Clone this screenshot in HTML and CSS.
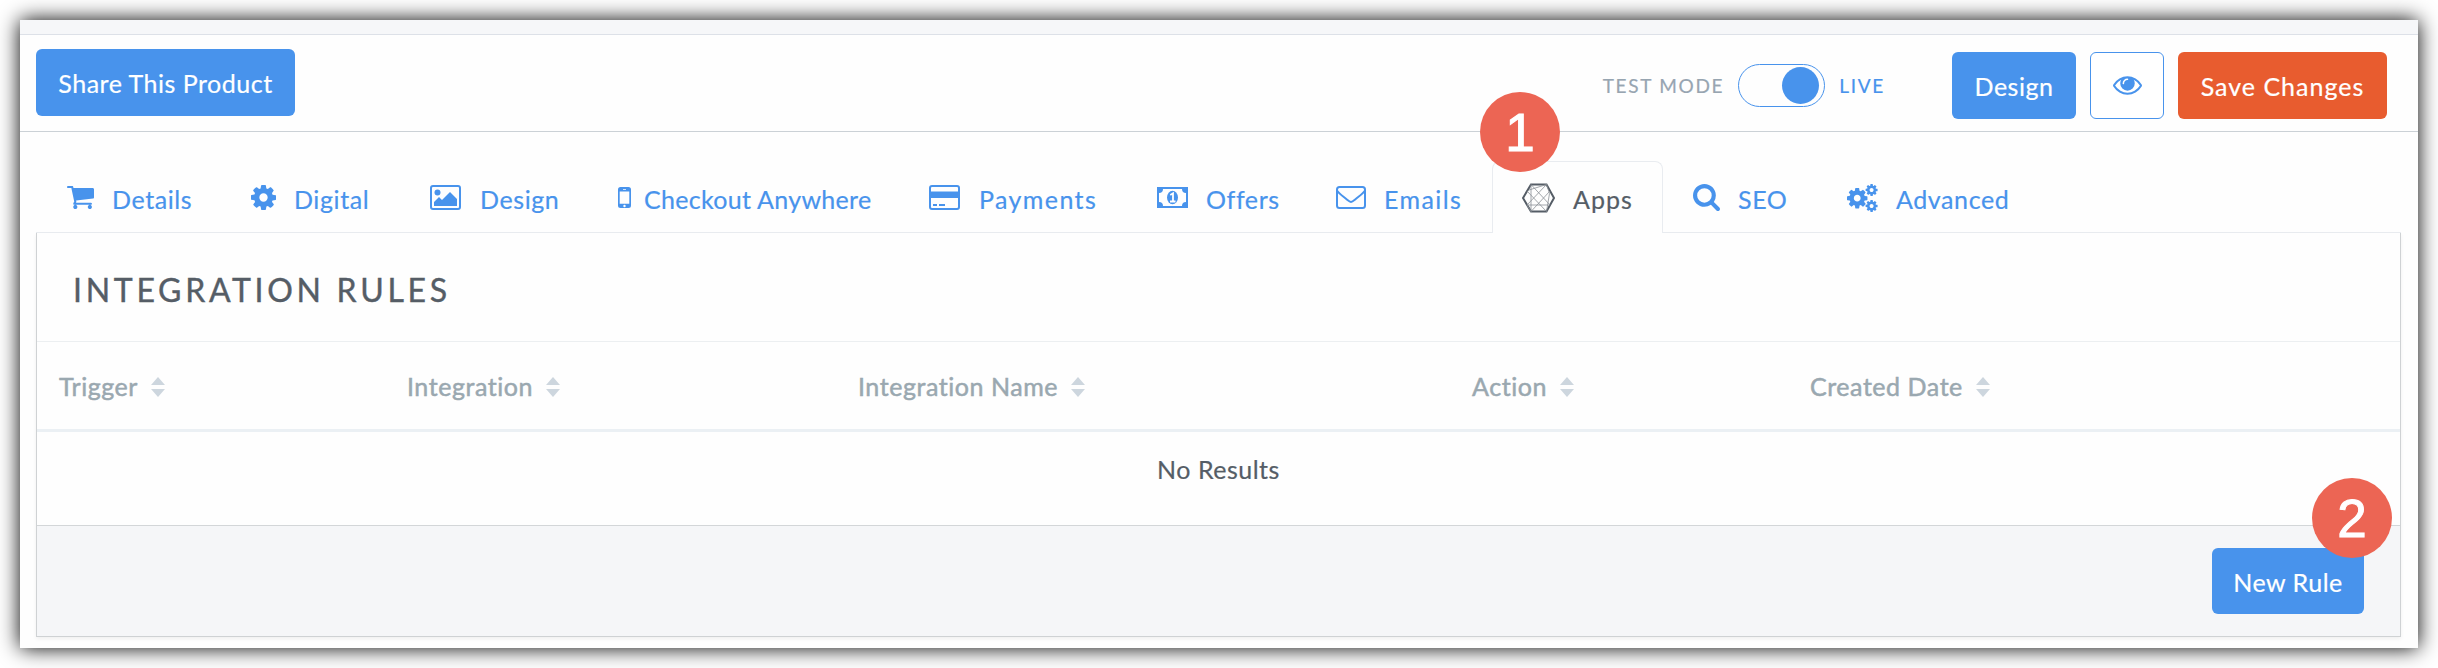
FILE: index.html
```html
<!DOCTYPE html>
<html lang="en">
<head>
    <meta charset="UTF-8">
    <meta name="viewport" content="width=device-width, initial-scale=1.0">
    <title>Integration Rules</title>
    <link rel="stylesheet" href="styles.css">
</head>
<body>
    <div class="window">
        <div class="strip"></div>

        <header>
            <button class="btn share">Share This Product</button>
            <div class="mode">
                <span class="test">TEST MODE</span>
                <span class="toggle"><span class="knob"></span></span>
                <span class="live">LIVE</span>
            </div>
            <div class="actions">
                <button class="btn design">Design</button>
                <button class="btn preview">
                    <svg width="29" height="19" viewBox="0 384 1792 1152"><path d="M1664 960q-152-236-381-353 61 104 61 225 0 185-131.500 316.500t-316.500 131.500-316.500-131.500-131.500-316.500q0-121 61-225-229 117-381 353 133 205 333.500 326.500t434.500 121.500 434.500-121.500 333.500-326.500zm-720-384q0-20-14-34t-34-14q-125 0-214.500 89.500t-89.500 214.500q0 20 14 34t34 14 34-14 14-34q0-86 61-147t147-61q20 0 34-14t14-34zm848 384q0 34-20 69-140 230-376.500 368.500t-499.500 138.500-499.500-139-376.500-368q-20-35-20-69t20-69q140-229 376.500-368t499.500-139 499.500 139 376.500 368q20 35 20 69z"/></svg>
                </button>
                <button class="btn save">Save Changes</button>
            </div>
        </header>

        <!-- Tabs -->
        <nav class="tabs">
            <a class="tab" href="#">
                <svg width="27" height="23" viewBox="64 256 1664 1408" preserveAspectRatio="none"><path d="M704 1536q0 52-38 90t-90 38-90-38-38-90 38-90 90-38 90 38 38 90zm896 0q0 52-38 90t-90 38-90-38-38-90 38-90 90-38 90 38 38 90zm128-1088v512q0 24-16.500 42.500t-40.500 21.500l-1044 122q13 60 13 70 0 16-24 64h920q26 0 45 19t19 45-19 45-45 19h-1024q-26 0-45-19t-19-45q0-11 8-31.500t16-36 21.500-40 15.500-29.500l-177-823h-204q-26 0-45-19t-19-45 19-45 45-19h256q16 0 28.500 6.500t19.500 15.500 13 24.500 8 26 5.500 29.500 4.500 26h1201q26 0 45 19t19 45z"/></svg>
                <span>Details</span>
            </a>
            <a class="tab" href="#">
                <svg width="25" height="25" viewBox="128 128 1536 1536"><path id="cog" d="M1152 896q0-106-75-181t-181-75-181 75-75 181 75 181 181 75 181-75 75-181zm512-109v222q0 12-8 23t-20 13l-185 28q-19 54-39 91 35 50 107 138 10 12 10 25t-9 23q-27 37-99 108t-94 71q-12 0-26-9l-138-108q-44 23-91 38-16 136-29 186-7 28-36 28h-222q-14 0-24.500-8.500t-11.500-21.500l-28-184q-49-16-90-37l-141 107q-10 9-25 9-14 0-25-11-126-114-165-168-7-10-7-23 0-12 8-23 15-21 51-66.500t54-70.500q-27-50-41-99l-183-27q-13-2-21-12.500t-8-23.500v-222q0-12 8-23t19-13l186-28q14-46 39-92-40-57-107-138-10-12-10-24 0-10 9-23 26-36 98.500-107.500t94.500-71.500q13 0 26 10l138 107q44-23 91-38 16-136 29-186 7-28 36-28h222q14 0 24.500 8.500t11.500 21.500l28 184q49 16 90 37l142-107q9-9 24-9 13 0 25 10 129 119 165 170 7 8 7 22 0 12-8 23-15 21-51 66.500t-54 70.500q26 50 41 98l183 28q13 2 21 12.500t8 23.500z"/></svg>
                <span>Digital</span>
            </a>
            <a class="tab wide-gap" href="#">
                <svg width="31" height="25" viewBox="0 0 31 25">
                    <rect class="line" x="1" y="1" width="29" height="23" rx="2"/>
                    <circle cx="7.500" cy="7.500" r="3"/>
                    <path d="M4 21V17l5-5 3 3 8-8 7 7v7z"/>
                </svg>
                <span>Design</span>
            </a>
            <a class="tab phone" href="#">
                <svg width="13" height="21" viewBox="0 0 13 21"><path fill-rule="evenodd" d="M2.500 0h8A2.500 2.500 0 0 1 13 2.500v16a2.500 2.500 0 0 1-2.500 2.500h-8A2.500 2.500 0 0 1 0 18.500v-16A2.500 2.500 0 0 1 2.500 0zM1.700 4.500v12.300h9.600V4.500zM5 2v.8h3V2zM6.500 17.800a1.200 1.200 0 1 0 0 2.400 1.200 1.200 0 0 0 0-2.400z"/></svg>
                <span>Checkout Anywhere</span>
            </a>
            <a class="tab wide-gap loose" href="#">
                <svg width="31" height="25" viewBox="0 0 31 25">
                    <rect class="line" x="1" y="1" width="29" height="23" rx="2"/>
                    <path d="M1 6.500h29V13H1zM4 19h4v2H4zM10 19h6v2h-6z"/>
                </svg>
                <span>Payments</span>
            </a>
            <a class="tab" href="#">
                <svg width="31" height="21" viewBox="0 0 31 21">
                    <path fill-rule="evenodd" d="M0 0h31v21H0zM6 2a4 4 0 0 1-4 4v9a4 4 0 0 1 4 4h19a4 4 0 0 1 4-4V6a4 4 0 0 1-4-4z"/>
                    <ellipse cx="15.500" cy="10.500" rx="5.500" ry="6.800"/>
                    <path class="cut" d="M13.300 8l2.700-1.700v7.900M13 14.500h5.500"/>
                </svg>
                <span>Offers</span>
            </a>
            <a class="tab loose" href="#">
                <svg width="30" height="23" viewBox="0 0 30 23">
                    <rect class="line" x="1" y="1" width="28" height="21" rx="2.500"/>
                    <path class="line" d="M1 4.500c2 3 5 5 9 8.200 2 1.600 3.500 3.200 5 3.200s3-1.600 5-3.200c4-3.200 7-5.200 9-8.200"/>
                </svg>
                <span>Emails</span>
            </a>
            <a class="tab active" href="#">
                <svg width="33" height="30" viewBox="0 0 33 30">
                    <path class="hex" d="M9 1.500h15.500L32 15l-7.500 13.500H9L1 15z"/>
                    <path class="mesh" d="M9 1.500L28 22M24.500 1.500L5 22M5 22h23M5 8l19.500 20.500M28 8L9 28.500M7 7l17.500-5.500M9 1.500V28.500M24.500 1.500l3 9-3 18M9 28.500L5 22"/>
                </svg>
                <span>Apps</span>
                <span class="badge badge-one">1</span>
            </a>
            <a class="tab" href="#">
                <svg width="27" height="27" viewBox="64 128 1664 1664"><path d="M1216 832q0-185-131.500-316.500t-316.500-131.500-316.500 131.500-131.500 316.500 131.500 316.500 316.500 131.500 316.500-131.500 131.500-316.500zm512 832q0 52-38 90t-90 38q-54 0-90-38l-343-342q-179 124-399 124-143 0-273.500-55.500t-225-150-150-225-55.500-273.500 55.500-273.500 150-225 225-150 273.500-55.500 273.500 55.500 225 150 150 225 55.500 273.500q0 220-124 399l343 343q37 37 37 90z"/></svg>
                <span>SEO</span>
            </a>
            <a class="tab" href="#">
                <svg width="31" height="28" viewBox="0 0 31 28">
                    <use href="#cog" transform="translate(-1.700 2.300) scale(.0133)"/>
                    <use href="#cog" transform="translate(17.600 -1) scale(.0078)"/>
                    <use href="#cog" transform="translate(17.600 15) scale(.0078)"/>
                </svg>
                <span>Advanced</span>
            </a>
        </nav>

        <section class="panel">
            <h2>INTEGRATION RULES</h2>
            <div class="head">
                <span>Trigger <i class="sort"></i></span>
                <span>Integration <i class="sort"></i></span>
                <span>Integration Name <i class="sort"></i></span>
                <span>Action <i class="sort"></i></span>
                <span>Created Date <i class="sort"></i></span>
            </div>
            <div class="empty">No Results</div>
            <div class="footer">
                <button class="btn new-rule">New Rule<span class="badge badge-two">2</span></button>
            </div>
        </section>
    </div>
</body>
</html>
```

FILE: styles.css
```css
* {
    box-sizing: border-box;
}
body {
    margin: 0;
    padding: 20px;
    background-color: #fff;
    color: #555d66;
    font-family: Lato, sans-serif;
    font-size: 25px;
    -webkit-text-stroke: 0.2px;
}
.window {
    height: 628px;
    background-color: #fefefe;
    box-shadow: 0 0 20px #000;
}
.strip {
    height: 15px;
    background-color: #f6f7f9;
    border-bottom: 1px solid #dde1e8;
}
header {
    display: flex;
    height: 97px;
    padding: 14px 31px 0 16px;
    border-bottom: 1px solid #cbd1d6;
}
.btn {
    height: 67px;
    padding: 0;
    border: none;
    border-radius: 6px;
    background-color: #4893ec;
    color: #fff;
    font-family: inherit;
    font-size: 25px;
    letter-spacing: 0.5px;
    line-height: 69px;
    text-align: center;
    white-space: nowrap;
}
.share {
    width: 259px;
}
.mode {
    display: flex;
    align-items: center;
    height: 43px;
    margin: 15px 67px 0 auto;
    font-size: 19px;
    letter-spacing: 1.7px;
}
.test {
    color: #97a5b1;
}
.toggle {
    display: flex;
    justify-content: flex-end;
    width: 87px;
    height: 43px;
    margin: 0 14px;
    padding: 2px 5px;
    border: 1px solid #4893ec;
    border-radius: 22px;
}
.knob {
    width: 37px;
    height: 37px;
    border-radius: 50%;
    background-color: #4893ec;
}
.live {
    color: #4893ec;
}
.actions {
    display: flex;
    gap: 14px;
    margin-top: 3px;
}
.design {
    width: 124px;
}
.preview {
    display: flex;
    align-items: center;
    justify-content: center;
    width: 74px;
    border: 1px solid #4893ec;
    background-color: #fff;
}
.preview svg {
    fill: #4893ec;
}
.save {
    width: 209px;
    background-color: #e85c2f;
    letter-spacing: 1px;
}

/* Tabs */
.tabs {
    display: grid;
    grid-template-columns: 184px 179px 188px 311px 228px 179px 186px 171px 154px 223px;
    height: 72px;
    margin: 29px 17px 0 16px;
    padding-left: 1px;
    border-bottom: 1px solid #e9ecf0;
}
.tab {
    display: flex;
    align-items: center;
    gap: 18px;
    position: relative;
    height: 72px;
    padding: 0 0 0 29px;
    border: 1px solid transparent;
    border-bottom: none;
    color: #4893ec;
    letter-spacing: 0.6px;
    text-decoration: none;
    white-space: nowrap;
}
.tab svg {
    flex: none;
    fill: currentColor;
}
.tab span {
    padding-top: 2px;
}
.wide-gap {
    gap: 19px;
}
.phone {
    gap: 13px;
    letter-spacing: 0.3px;
}
.loose {
    letter-spacing: 1.4px;
}
.active {
    border-color: #e9ecf0;
    border-radius: 8px 8px 0 0;
    background-color: #fefefe;
    color: #555d66;
    letter-spacing: 1px;
}
.tab .line {
    fill: none;
    stroke: #4893ec;
    stroke-width: 2;
}
.tab .cut {
    fill: none;
    stroke: #fff;
    stroke-width: 1.8;
}
.tab .hex {
    fill: none;
    stroke: #555d66;
    stroke-width: 2;
}
.tab .mesh {
    fill: none;
    stroke: #8b9197;
    stroke-width: 0.8;
}

/* Rules */
.panel {
    height: 404px;
    margin: 0 17px 0 16px;
    border: 1px solid #cfd2d4;
    border-top: none;
    box-shadow: 0 2px 4px rgba(0, 0, 0, 0.06);
}
h2 {
    height: 109px;
    margin: 0;
    padding-left: 36px;
    border-bottom: 1px solid #eceff1;
    font-size: 32px;
    font-weight: 400;
    letter-spacing: 3.7px;
    line-height: 113px;
    -webkit-text-stroke: 0.4px;
}
.head {
    display: grid;
    grid-template-columns: 348px 451px 614px 338px 1fr;
    align-items: center;
    height: 90px;
    padding-left: 22px;
    border-bottom: 3px solid #ebf0f4;
    color: #9aa8b0;
    -webkit-text-stroke: 0.5px;
}
.head span {
    display: flex;
    align-items: center;
    gap: 13px;
    letter-spacing: 0.55px;
}
.sort {
    display: flex;
    flex-direction: column;
    gap: 4px;
    margin-top: 3px;
}
.sort::before,
.sort::after {
    content: "";
    border: 7px solid transparent;
}
.sort::before {
    border-top: none;
    border-bottom: 8px solid #cdd6de;
}
.sort::after {
    border-bottom: none;
    border-top: 8px solid #cdd6de;
}
.empty {
    height: 93px;
    letter-spacing: 0.5px;
    line-height: 75px;
    text-align: center;
}
.footer {
    display: flex;
    justify-content: flex-end;
    height: 111px;
    padding: 22px 36px 0 0;
    border-top: 1px solid #d3d6d8;
    background-color: #f5f6f8;
}
.new-rule {
    position: relative;
    width: 152px;
    height: 66px;
}

/* Numbered markers */
.tab .badge,
.badge {
    position: absolute;
    width: 80px;
    height: 80px;
    padding: 0;
    border-radius: 50%;
    background-color: #ec6554;
    color: #fff;
    font-family: "Liberation Sans", sans-serif;
    font-size: 53px;
    letter-spacing: 0;
    line-height: 82px;
    text-align: center;
    -webkit-text-stroke: 1px;
}
.badge-one {
    top: -70px;
    left: -13px;
}
.badge-two {
    top: -70px;
    left: 100px;
}
```
